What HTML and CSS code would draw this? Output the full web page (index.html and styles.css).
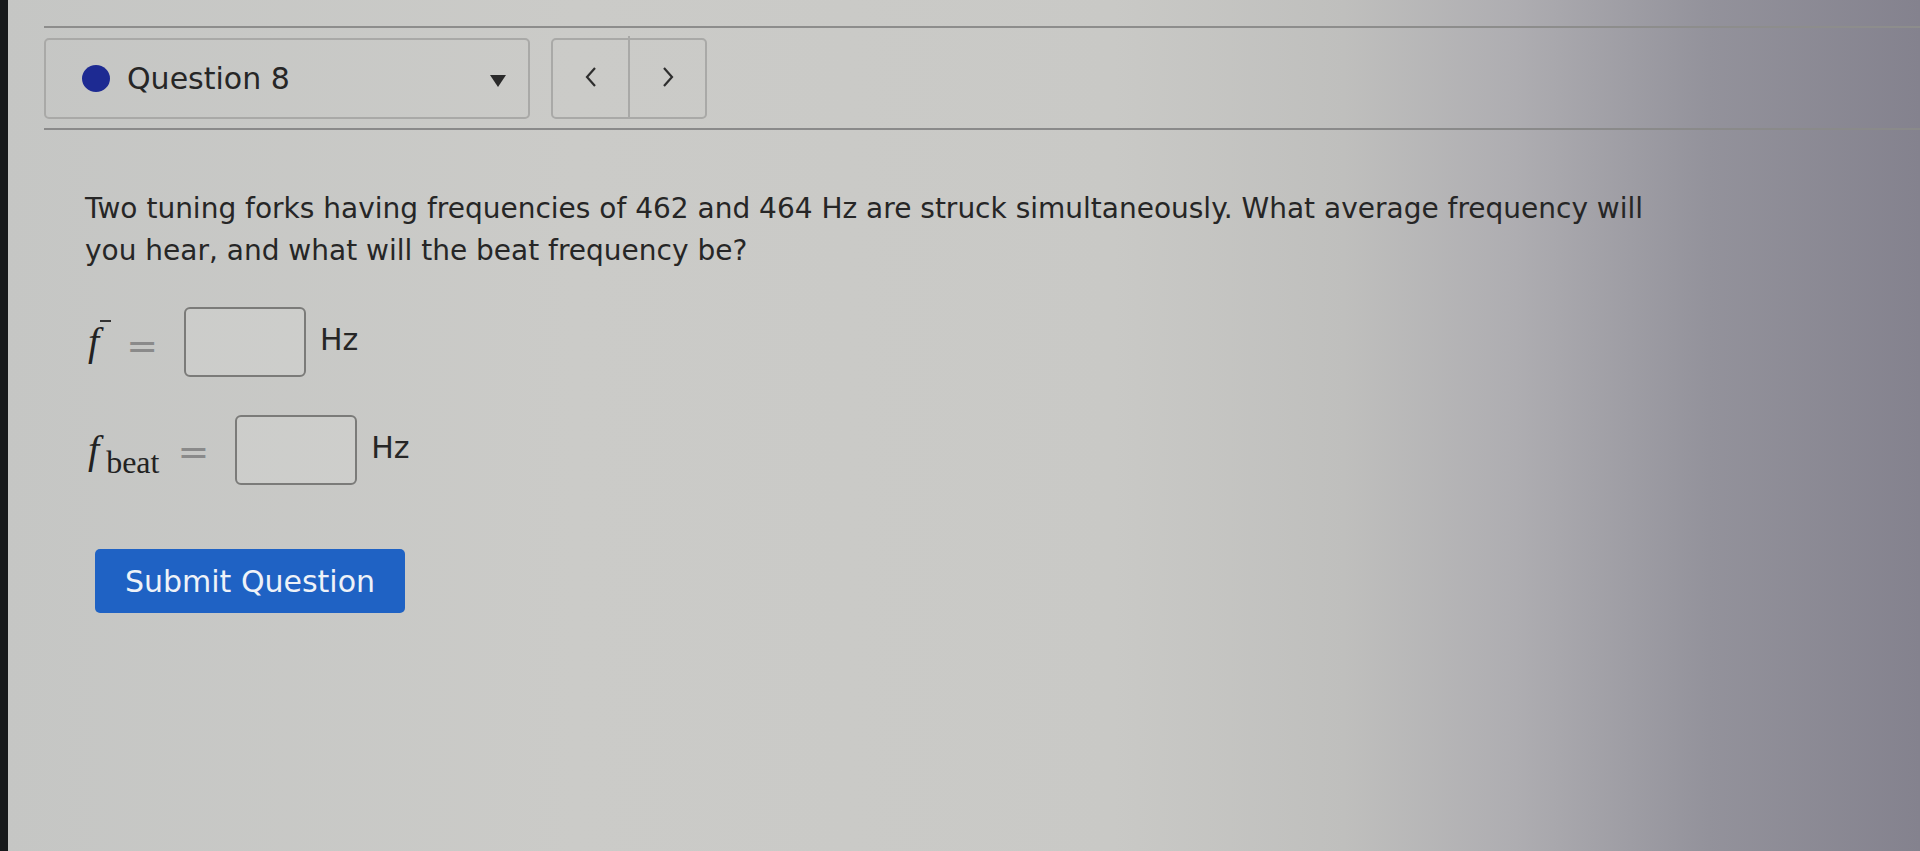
FILE: index.html
```html
<!DOCTYPE html>
<html lang="en">
<head>
<meta charset="utf-8">
<title>Question 8</title>
<link rel="stylesheet" href="styles.css">
</head>
<body>
<div class="edge"></div>
<div class="page">
  <div class="header">
    <div class="dropdown">
      <span class="dot"></span>
      <span class="qlabel">Question 8</span>
      <span class="caret"></span>
    </div>
    <div class="nav">
      <button class="navbtn" aria-label="Previous">
        <svg width="18" height="22" viewBox="0 0 18 22"><polyline points="13,2 5,11 13,20" fill="none" stroke="#2e2e2e" stroke-width="2.2"/></svg>
      </button>
      <button class="navbtn" aria-label="Next">
        <svg width="18" height="22" viewBox="0 0 18 22"><polyline points="5,2 13,11 5,20" fill="none" stroke="#2e2e2e" stroke-width="2.2"/></svg>
      </button>
    </div>
  </div>
  <div class="content">
    <p class="question">Two tuning forks having frequencies of 462 and 464 Hz are struck simultaneously. What average frequency will you hear, and what will the beat frequency be?</p>
    <div class="row row1">
      <span class="var fbar">f</span>
      <span class="eq eq1">=</span>
      <span class="answer"></span>
      <span class="unit">Hz</span>
    </div>
    <div class="row row2">
      <span class="var">f<span class="sub">beat</span></span>
      <span class="eq eq2">=</span>
      <span class="answer"></span>
      <span class="unit">Hz</span>
    </div>
    <button class="submit">Submit Question</button>
  </div>
</div>
</body>
</html>
```
FILE: styles.css
```css
html, body {
  margin: 0;
  height: 100%;
}
body {
  display: flex;
  min-height: 851px;
  overflow: hidden;
  font-family: "DejaVu Sans", "Noto Sans", sans-serif;
  color: #262626;
  background: linear-gradient(90deg, #c5c6c4 0%, #cbcbc8 30%, #c9c9c6 58%, #bfbfbd 70%, #aeadb1 79%, #93929b 89%, #84828e 100%);
}
.edge {
  width: 8px;
  flex: none;
  background: #17191b;
}
.page {
  flex: 1;
  padding-top: 26px;
}
.header {
  margin-left: 36px;
  border-top: 2px solid #8d8d8c;
  border-bottom: 2px solid #8a8a8a;
  padding: 10px 0 9px;
  display: flex;
  gap: 21px;
}
.dropdown {
  width: 486px;
  height: 81px;
  box-sizing: border-box;
  border: 2px solid #a9a9a7;
  border-radius: 5px;
  display: flex;
  align-items: center;
  padding-left: 36px;
  padding-right: 20px;
}
.dot {
  width: 28px;
  height: 27px;
  border-radius: 50%;
  background: #1d2a92;
  flex: none;
}
.qlabel {
  font-size: 30px;
  margin-left: 17px;
  color: #262626;
}
.caret {
  margin-left: auto;
  width: 0;
  height: 0;
  border-left: 8px solid transparent;
  border-right: 8px solid transparent;
  border-top: 12px solid #2a2a2a;
  margin-top: 4px;
  margin-right: 2px;
}
.nav {
  width: 156px;
  height: 81px;
  box-sizing: border-box;
  border: 2px solid #a9a9a7;
  border-radius: 5px;
  display: flex;
}
.navbtn {
  flex: 1;
  background: transparent;
  border: 0;
  padding: 0;
  display: flex;
  align-items: center;
  justify-content: center;
  margin-top: -4px;
}
.navbtn + .navbtn {
  border-left: 2px solid #a9a9a7;
}
.content {
  padding-left: 77px;
}
.question {
  margin: 58px 0 0;
  width: 1600px;
  font-size: 28px;
  line-height: 42px;
  color: #262626;
}
.row {
  display: flex;
  align-items: center;
  height: 70px;
}
.row1 {
  margin-top: 35px;
}
.row2 {
  margin-top: 38px;
}
.var {
  font-family: "Liberation Serif", "DejaVu Serif", serif;
  font-style: italic;
  font-size: 40px;
  color: #222;
  margin-left: 3px;
  position: relative;
  line-height: 1;
}
.fbar::before {
  content: "";
  position: absolute;
  left: 12px;
  top: -2px;
  width: 11px;
  height: 2px;
  background: #333;
}
.sub {
  font-style: normal;
  font-size: 32px;
  position: relative;
  top: 10px;
  margin-left: 7px;
}
.eq {
  font-family: "DejaVu Serif", serif;
  font-size: 38px;
  color: #8a8a8a;
  line-height: 1;
}
.eq1 {
  margin-left: 27px;
  margin-right: 26px;
  margin-top: 8px;
}
.eq2 {
  margin-left: 18px;
  margin-right: 26px;
  margin-top: 4px;
}
.answer {
  width: 122px;
  height: 70px;
  box-sizing: border-box;
  border: 2px solid #7b7b79;
  border-radius: 6px;
  background: rgba(255, 255, 255, 0.1);
}
.unit {
  font-size: 30px;
  margin-left: 14px;
  margin-top: -6px;
  color: #262626;
}
.submit {
  margin-top: 64px;
  margin-left: 10px;
  width: 310px;
  height: 64px;
  border: 0;
  border-radius: 5px;
  background: #1f62c4;
  color: #eef2f8;
  font-family: "DejaVu Sans", sans-serif;
  font-size: 30px;
  padding: 0;
  display: block;
}
```
